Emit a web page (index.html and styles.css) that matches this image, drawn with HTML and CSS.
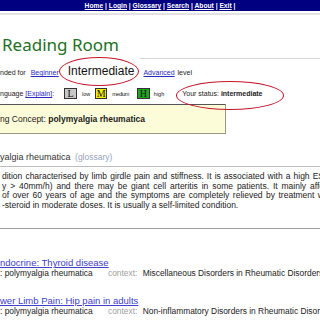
FILE: index.html
```html
<!DOCTYPE html>
<html>
<head>
<meta charset="utf-8">
<link rel="stylesheet" href="styles.css">
</head>
<body>
<div class="page">
  <div class="nav">
    <a href="#">Home</a> | <a href="#">Login</a> | <a href="#">Glossary</a> | <a href="#">Search</a> | <a href="#">About</a> | <a href="#">Exit</a> |
  </div>
  <div class="navline"></div>

  <div class="head">
    <h1 class="title">Reading Room</h1>
    <div class="headrule"></div>
  </div>

  <div class="level-row">
    <span class="small">nded for</span>
    <a class="small link beg" href="#">Beginner</a>
    <span class="current">Intermediate</span>
    <a class="small link adv" href="#">Advanced</a>
    <span class="small lvl">level</span>
    <span class="ellipse ell-level"></span>
  </div>

  <div class="lang-row">
    <span class="small lang">nguage <a class="link" href="#">[Explain]</a>:</span>
    <span class="chip chip-l">L</span><span class="tiny t-low">low</span>
    <span class="chip chip-m">M</span><span class="tiny t-med">medium</span>
    <span class="chip chip-h">H</span><span class="tiny t-high">high</span>
    <span class="small status">Your status: <b>intermediate</b></span>
    <span class="ellipse ell-status"></span>
  </div>

  <div class="concept">ng Concept: <b>polymyalgia rheumatica</b></div>

  <div class="term">yalgia rheumatica <span class="gloss">(glossary)</span></div>
  <div class="rule"></div>

  <div class="para">
    <div class="pl j">dition characterised by limb girdle pain and stiffness. It is associated with a high ES</div>
    <div class="pl j">y &gt; 40mm/h) and there may be giant cell arteritis in some patients. It mainly affe</div>
    <div class="pl j">of over 60 years of age and the symptoms are completely relieved by treatment w</div>
    <div class="pl">-steroid in moderate doses. It is usually a self-limited condition.</div>
  </div>
  <div class="rule rule2"></div>

  <div class="result first">
    <a class="rlink" href="#">ndocrine: Thyroid disease</a>
    <div class="meta"><span class="mterm">: polymyalgia rheumatica</span><span class="ctx">context:</span> Miscellaneous Disorders in Rheumatic Disorders.</div>
  </div>
  <div class="result">
    <a class="rlink" href="#">wer Limb Pain: Hip pain in adults</a>
    <div class="meta"><span class="mterm">: polymyalgia rheumatica</span><span class="ctx">context:</span> Non-inflammatory Disorders in Rheumatic Disorders</div>
  </div>
</div>
</body>
</html>
```

FILE: styles.css
```css
html, body {
  margin: 0;
  padding: 0;
  background: #ffffff;
  overflow: hidden;
}
.page {
  width: 320px;
  height: 320px;
  overflow: hidden;
  position: relative;
  font-family: "Liberation Sans", Arial, sans-serif;
  color: #222;
}
.nav {
  height: 11px;
  background: #000080;
  color: #ffffff;
  font-size: 6.7px;
  font-weight: bold;
  line-height: 11px;
  text-align: center;
  white-space: nowrap;
}
.nav a {
  color: #ffffff;
  text-decoration: underline;
}
.navline {
  height: 2px;
  margin-top: 2px;
  background: #e2e2e2;
}
.head {
  height: 44px;
}
.title {
  margin: 0;
  padding-top: 20px;
  padding-left: 2px;
  font-family: "Noto Sans", sans-serif;
  font-weight: normal;
  font-size: 17px;
  line-height: 20px;
  color: #237023;
}
.headrule {
  margin-left: 140px;
  margin-top: 3px;
  height: 1px;
  background: #d4d4d4;
}
.small {
  font-size: 7px;
  color: #222;
}
.link {
  color: #2a2ac0;
  text-decoration: underline;
}
.level-row {
  position: relative;
  display: flex;
  align-items: baseline;
  box-sizing: border-box;
  height: 24px;
  padding-top: 5px;
  white-space: nowrap;
}
.beg { margin-left: 5px; }
.current {
  font-size: 12px;
  color: #111;
  margin-left: 9px;
}
.adv { margin-left: 9px; }
.lvl { margin-left: 3px; }
.ellipse {
  position: absolute;
  border: 1px solid #c4162a;
  border-radius: 50%;
}
.ell-level {
  left: 59px;
  top: -2px;
  width: 78px;
  height: 27px;
}
.lang-row {
  position: relative;
  display: flex;
  align-items: center;
  height: 21px;
  white-space: nowrap;
}
.lang {
  width: 64px;
}
.chip {
  box-sizing: border-box;
  width: 13px;
  height: 11px;
  border: 1px solid #333;
  font-family: "Liberation Serif", serif;
  font-size: 10px;
  line-height: 9px;
  text-align: center;
  color: #111;
}
.chip-l { background: #c8c8c8; }
.chip-m { background: #f2ee00; width: 12px; margin-left: 5px; }
.chip-h { background: #1fa81f; margin-left: 8px; }
.tiny {
  font-size: 5.5px;
  color: #222;
}
.t-low { margin-left: 5px; }
.t-med { margin-left: 5px; letter-spacing: -0.5px; }
.t-high { margin-left: 4px; }
.status {
  margin-left: 18px;
}
.ell-status {
  left: 176px;
  top: -2px;
  width: 106px;
  height: 27px;
}
.concept {
  box-sizing: border-box;
  width: 226px;
  height: 30px;
  background: #fdfcd8;
  border: 1px solid #9a9a86;
  border-left: none;
  border-top-color: #555;
  font-size: 8.5px;
  line-height: 28px;
  color: #222;
  white-space: nowrap;
}
.term {
  margin-top: 17px;
  font-size: 9px;
  line-height: 12px;
  color: #333;
  white-space: nowrap;
}
.gloss {
  color: #9aa4c0;
  font-size: 8.5px;
  margin-left: 2px;
}
.rule {
  height: 1px;
  background: #bdbdbd;
  margin-top: 3px;
}
.para {
  padding-top: 5px;
  width: 322px;
  padding-left: 2px;
  font-size: 8.5px;
  line-height: 9.6px;
  color: #222;
}
.pl {
  white-space: nowrap;
}
.pl.j {
  text-align: justify;
  text-align-last: justify;
}
.rule2 {
  margin-top: 18px;
  background: #9e9e9e;
}
.result {
  margin-top: 18px;
  white-space: nowrap;
}
.result.first {
  margin-top: 29px;
}
.rlink {
  display: block;
  font-size: 9.5px;
  line-height: 10px;
  color: #4040c8;
  text-decoration: underline;
}
.meta {
  font-size: 8.4px;
  line-height: 10px;
  color: #222;
}
.mterm {
  display: inline-block;
  width: 108px;
}
.ctx {
  color: #a0a0a0;
  margin-right: 3px;
}
```
